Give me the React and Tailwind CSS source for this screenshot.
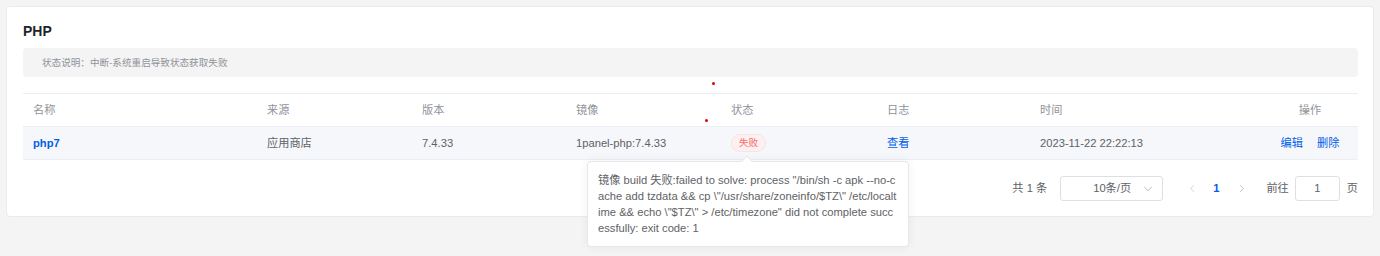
const font = { fontFamily: '"Liberation Sans", Arial, "Noto Sans CJK SC", sans-serif' };

const cols = [
  { key: 'name', label: '名称', w: 'w-[234px]' },
  { key: 'source', label: '来源', w: 'w-[155px]' },
  { key: 'version', label: '版本', w: 'w-[154px]' },
  { key: 'image', label: '镜像', w: 'w-[155px]' },
  { key: 'status', label: '状态', w: 'w-[156px]' },
  { key: 'log', label: '日志', w: 'w-[153px]' },
  { key: 'time', label: '时间', w: 'w-[232px]' },
];

function Chevron({ dir = 'down', className = '' }) {
  const d = {
    down: 'M2 4l4 4 4-4',
    left: 'M7.5 2L3.5 6l4 4',
    right: 'M4.5 2l4 4-4 4',
  }[dir];
  return (
    <svg viewBox="0 0 12 12" className={className} fill="none" stroke="currentColor" strokeWidth="1" strokeLinecap="round" strokeLinejoin="round">
      <path d={d} />
    </svg>
  );
}

function StatusTag() {
  return (
    <span className="inline-flex items-center h-[18px] px-[7px] rounded-full bg-[#fef0f0] border border-[#fde2e2] text-[#f56c6c] text-[9.6px] leading-none">
      失败
    </span>
  );
}

function Tooltip() {
  const lines = [
    '镜像 build 失败:failed to solve: process "/bin/sh -c apk --no-c',
    'ache add tzdata && cp \\"/usr/share/zoneinfo/$TZ\\" /etc/localt',
    'ime && echo \\"$TZ\\" > /etc/timezone" did not complete succ',
    'essfully: exit code: 1',
  ];
  return (
    <div className="absolute left-[587px] top-[161px] w-[322px] bg-white border border-[#e4e7ed] rounded-[4px] shadow-[0_0_10px_rgba(0,0,0,0.06)] px-[10px] py-[10px] text-[11.2px] leading-[16px] text-[#606266] z-10">
      <div className="absolute left-[155px] -top-[5px] w-[8px] h-[8px] bg-white border-l border-t border-[#e4e7ed] rotate-45"></div>
      {lines.map((l, i) => (
        <div key={i} className="whitespace-pre">{l}</div>
      ))}
    </div>
  );
}

function Pagination() {
  return (
    <div className="flex items-center justify-end h-[25px] mt-[16px] text-[11.2px] text-[#606266]">
      <span className="mr-[13px]">共 1 条</span>
      <div className="w-[103px] h-[25px] border border-[#dcdfe6] rounded-[3px] flex items-center pl-[32px] pr-[9px]">
        <span className="flex-1">10条/页</span>
        <Chevron dir="down" className="w-[10px] h-[10px] text-[#a8abb2]" />
      </div>
      <div className="flex items-center ml-[25px]">
        <Chevron dir="left" className="w-[9px] h-[9px] text-[#c0c4cc]" />
        <span className="ml-[16px] mr-[18px] text-[#005eeb] font-bold">1</span>
        <Chevron dir="right" className="w-[9px] h-[9px] text-[#a8abb2]" />
      </div>
      <span className="ml-[20px]">前往</span>
      <div className="w-[45px] h-[25px] ml-[6px] border border-[#dcdfe6] rounded-[3px] flex items-center justify-center">1</div>
      <span className="ml-[7px]">页</span>
    </div>
  );
}

export default function App() {
  return (
    <div className="relative w-[1380px] h-[256px] bg-[#f4f4f5] pt-[6px] pl-[6px] overflow-hidden" style={font}>
      <div className="w-[1368px] h-[211px] bg-white border border-[#e9ebef] rounded-[4px] pl-[16px] pr-[15px] pt-[13px]">
        <div className="h-[22px] leading-[22px] text-[14px] font-bold text-[#1f2329]">PHP</div>
        <div className="mt-[6px] h-[29px] rounded-[4px] bg-[#f4f4f5] px-[19px] text-[9.6px] leading-[29px] text-[#909399]">
          状态说明：中断-系统重启导致状态获取失败
        </div>
        <div className="mt-[16px] border-t border-[#ebeef5] text-[11.2px]">
          <div className="flex h-[33px] items-center border-b border-[#ebeef5] text-[#909399]">
            {cols.map((c) => (
              <div key={c.key} className={`${c.w} px-[10px]`}>{c.label}</div>
            ))}
            <div className="w-[96px] text-center">操作</div>
          </div>
          <div className="flex h-[33px] items-center border-b border-[#ebeef5] bg-[#f5f7fa] text-[#606266]">
            <div className="w-[234px] px-[10px] font-bold text-[#005eeb]">php7</div>
            <div className="w-[155px] px-[10px]">应用商店</div>
            <div className="w-[154px] px-[10px]">7.4.33</div>
            <div className="w-[155px] px-[10px]">1panel-php:7.4.33</div>
            <div className="w-[156px] px-[10px] flex"><StatusTag /></div>
            <div className="w-[153px] px-[10px] text-[#005eeb]">查看</div>
            <div className="w-[232px] px-[10px]">2023-11-22 22:22:13</div>
            <div className="w-[96px] flex justify-center gap-[14px] text-[#005eeb]">
              <span>编辑</span>
              <span>删除</span>
            </div>
          </div>
        </div>
        <Pagination />
      </div>
      <Tooltip />
      <div className="absolute left-[712px] top-[82px] w-[3px] h-[3px] rounded-full bg-[#e00000]"></div>
      <div className="absolute left-[705px] top-[119px] w-[3px] h-[3px] rounded-full bg-[#e00000]"></div>
    </div>
  );
}
